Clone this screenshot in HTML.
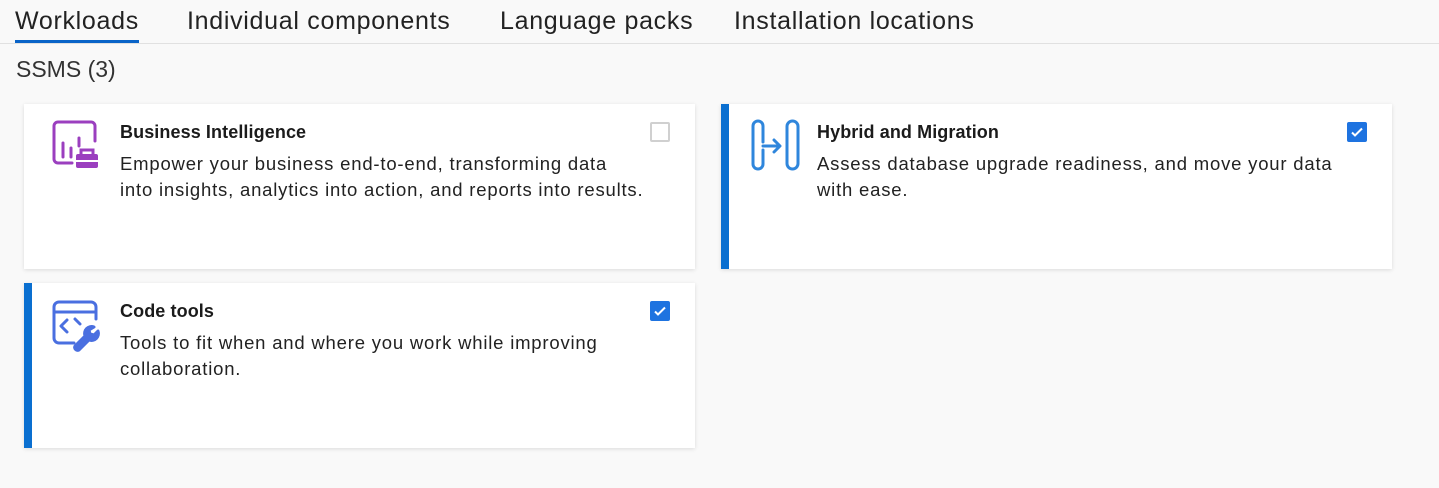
<!DOCTYPE html>
<html><head><style>
body{margin:0;width:1439px;height:488px;background:#f9f9f9;font-family:"Liberation Sans",sans-serif;color:#1b1b1b;position:relative;overflow:hidden}
.tab{position:absolute;top:7px;font-size:25px;letter-spacing:0.7px;color:#222}
.sep{position:absolute;left:0;top:43px;width:1439px;height:1px;background:#e1e1e1}
.ul{position:absolute;left:15px;top:40px;width:124px;height:3px;background:#0a64c8}
.card{position:absolute;width:671px;height:165px;background:#fff;box-shadow:0 1px 4px rgba(0,0,0,.12)}
.bar{position:absolute;left:0;top:0;width:8px;height:100%;background:#0a6fd0}
.t{position:absolute;left:96px;top:18px;font-size:18px;letter-spacing:0.1px;font-weight:bold}
.d{position:absolute;left:96px;top:47px;font-size:18.5px;letter-spacing:0.8px;line-height:26px;color:#222;white-space:nowrap}
.cb{position:absolute;left:626px;top:18px;width:20px;height:20px;box-sizing:border-box;border:2px solid #d0d0d0;border-radius:2px}
.cb.on{background:#1e73e0;border-color:#1e73e0}
svg.i{position:absolute;left:26px;top:14px}
</style></head><body>
<div class="tab" style="left:15px">Workloads</div>
<div class="tab" style="left:187px">Individual components</div>
<div class="tab" style="left:500px">Language packs</div>
<div class="tab" style="left:734px">Installation locations</div>
<div class="sep"></div><div class="ul"></div>
<div style="position:absolute;left:16px;top:56px;font-size:23px;color:#333">SSMS (3)</div>

<div class="card" style="left:24px;top:104px">
<svg class="i" width="52" height="54" viewBox="0 0 52 54" fill="none" stroke="#9b3fbf" stroke-width="3" stroke-linecap="round">
<path d="M22 45H8a4 4 0 0 1-4-4V8a4 4 0 0 1 4-4h33a4 4 0 0 1 4 4v15"/>
<path d="M13 25v14M21 30v9M29 20v8"/>
<rect x="26" y="36" width="22" height="14" rx="2" fill="#9b3fbf" stroke="none"/>
<path d="M31 36v-4h12v4" />
<path d="M26 43h22" stroke="#fff" stroke-width="2"/>
</svg>
<div class="t">Business Intelligence</div>
<div class="d">Empower your business end-to-end, transforming data<br>into insights, analytics into action, and reports into results.</div>
<div class="cb"></div>
</div>

<div class="card" style="left:721px;top:104px"><div class="bar"></div>
<svg class="i" width="58" height="54" viewBox="0 0 58 54" fill="none" stroke="#2f86dc" stroke-width="3" stroke-linecap="round" stroke-linejoin="round">
<path d="M16 24V8a5 5 0 0 0-10 0v38a5 5 0 0 0 10 0V32"/>
<rect x="40" y="3" width="11" height="48" rx="5.5"/>
<path d="M16 28h16M27 22l6 6-6 6"/>
</svg>
<div class="t">Hybrid and Migration</div>
<div class="d">Assess database upgrade readiness, and move your data<br>with ease.</div>
<div class="cb on"><svg width="16" height="16" viewBox="0 0 16 16" style="position:absolute;left:0;top:0"><path d="M3 8.5l3 3 7-7" stroke="#fff" stroke-width="2" fill="none"/></svg></div>
</div>

<div class="card" style="left:24px;top:283px"><div class="bar"></div>
<svg class="i" width="56" height="56" viewBox="0 0 56 56" fill="none" stroke="#4a6fe0" stroke-width="3" stroke-linecap="round" stroke-linejoin="round">
<path d="M24 46H9a5 5 0 0 1-5-5V10a5 5 0 0 1 5-5h32a5 5 0 0 1 5 5v12"/>
<path d="M4 15h42"/>
<path d="M17 23l-6 6 6 6M25 22l5 5"/>
<path d="M44 30a7 7 0 0 0-9 9L25 49a3 3 0 0 0 4 4l10-10a7 7 0 0 0 9-9l-4 4-4-1-1-4z" fill="#4a6fe0"/>
</svg>
<div class="t">Code tools</div>
<div class="d">Tools to fit when and where you work while improving<br>collaboration.</div>
<div class="cb on"><svg width="16" height="16" viewBox="0 0 16 16" style="position:absolute;left:0;top:0"><path d="M3 8.5l3 3 7-7" stroke="#fff" stroke-width="2" fill="none"/></svg></div>
</div>
</body></html>
